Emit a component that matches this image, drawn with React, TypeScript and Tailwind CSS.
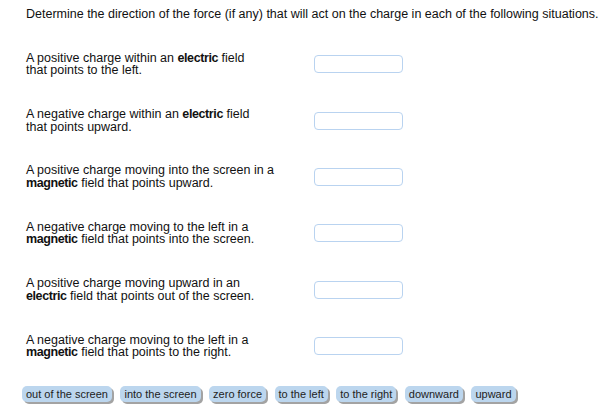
const questions: { lines: [React.ReactNode, React.ReactNode] }[] = [
  {
    lines: [
      <>A positive charge within an <b className="font-bold tracking-[-0.4px]">electric</b> field</>,
      <>that points to the left.</>,
    ],
  },
  {
    lines: [
      <>A negative charge within an <b className="font-bold tracking-[-0.4px]">electric</b> field</>,
      <>that points upward.</>,
    ],
  },
  {
    lines: [
      <>A positive charge moving into the screen in a</>,
      <><b className="font-bold tracking-[-0.4px]">magnetic</b> field that points upward.</>,
    ],
  },
  {
    lines: [
      <>A negative charge moving to the left in a</>,
      <><b className="font-bold tracking-[-0.4px]">magnetic</b> field that points into the screen.</>,
    ],
  },
  {
    lines: [
      <>A positive charge moving upward in an</>,
      <><b className="font-bold tracking-[-0.4px]">electric</b> field that points out of the screen.</>,
    ],
  },
  {
    lines: [
      <>A negative charge moving to the left in a</>,
      <><b className="font-bold tracking-[-0.4px]">magnetic</b> field that points to the right.</>,
    ],
  },
]

const answers = [
  "out of the screen",
  "into the screen",
  "zero force",
  "to the left",
  "to the right",
  "downward",
  "upward",
]

export default function App() {
  return (
    <div
      className="w-[612px] h-[409px] bg-white text-[#111] overflow-hidden"
      style={{ fontFamily: '"Liberation Sans", Arial, sans-serif' }}
    >
      <p className="pt-[7px] pl-[26px] text-[12.5px] leading-[14px] whitespace-nowrap">
        Determine the direction of the force (if any) that will act on the charge in each of the following situations.
      </p>

      <div className="mt-[15px] flex flex-col">
        {questions.map((q, i) => (
          <div key={i} className="h-[56.4px] flex items-center pl-[26px]">
            <div className="w-[288px] text-[12.5px] leading-[12.5px]">
              {q.lines[0]}
              <br />
              {q.lines[1]}
            </div>
            <div className="w-[89px] h-[18px] rounded-[4px] border border-[#b9d3f0] bg-white" />
          </div>
        ))}
      </div>

      <div className="mt-[12px] pl-[22px] flex gap-[8.5px]">
        {answers.map((a) => (
          <div
            key={a}
            className="h-[16px] px-[4px] rounded-[5px] bg-[#bcd6ee] text-[11px] leading-[16px] text-[#222] shadow-[2px_2px_0_#a3a3a3] whitespace-nowrap"
          >
            {a}
          </div>
        ))}
      </div>
    </div>
  )
}
